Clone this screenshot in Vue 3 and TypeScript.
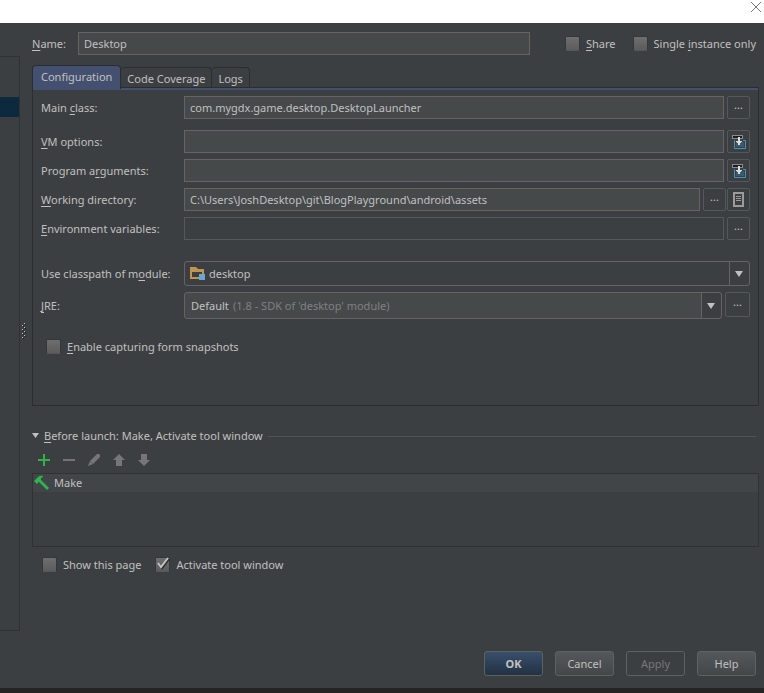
<script setup lang="ts">
import { reactive } from 'vue'

interface Mnemonic {
  before: string
  key: string
  after: string
}

interface FieldRow {
  id: string
  label: Mnemonic
  value: string
  disabled?: boolean
  spaced?: boolean
  buttons: { kind: 'browse' | 'insert' | 'list'; title: string }[]
}

const tabs: string[] = ['Configuration', 'Code Coverage', 'Logs']
const state = reactive({
  name: 'Desktop',
  tab: 'Configuration',
  share: false,
  single: false,
  capture: false,
  showPage: false,
  activate: true,
  module: 'desktop',
  jre: 'Default',
})

const rows = reactive<FieldRow[]>([
  {
    id: 'main-class',
    label: { before: 'Main ', key: 'c', after: 'lass:' },
    value: 'com.mygdx.game.desktop.DesktopLauncher',
    spaced: true,
    buttons: [{ kind: 'browse', title: 'Browse classes' }],
  },
  {
    id: 'vm-options',
    label: { before: '', key: 'V', after: 'M options:' },
    value: '',
    buttons: [{ kind: 'insert', title: 'Expand VM options' }],
  },
  {
    id: 'program-arguments',
    label: { before: 'Program a', key: 'r', after: 'guments:' },
    value: '',
    buttons: [{ kind: 'insert', title: 'Expand program arguments' }],
  },
  {
    id: 'working-directory',
    label: { before: '', key: 'W', after: 'orking directory:' },
    value: 'C:\\Users\\JoshDesktop\\git\\BlogPlayground\\android\\assets',
    buttons: [
      { kind: 'browse', title: 'Browse directories' },
      { kind: 'list', title: 'Insert macro' },
    ],
  },
  {
    id: 'environment-variables',
    label: { before: '', key: 'E', after: 'nvironment variables:' },
    value: '',
    disabled: true,
    buttons: [{ kind: 'browse', title: 'Edit environment variables' }],
  },
])
</script>

<template>
  <div class="window">
    <header class="titlebar">
      <button class="close" type="button" aria-label="Close">
        <svg width="12" height="12" viewBox="0 0 12 12"><path d="M1 1l10 10M11 1L1 11" stroke="#777" fill="none" /></svg>
      </button>
    </header>

    <div class="body">
      <aside class="sidebar"><div class="sidebar-selection"></div></aside>
      <div class="splitter">
        <svg width="5" height="16" viewBox="0 0 5 16">
          <path d="M3 .5h1M1 2.5h1M3 4.5h1M1 6.5h1M3 8.5h1M1 10.5h1M3 12.5h1M1 14.5h1" stroke="#c4c4c4" />
          <path d="M4 1.5h1M2 3.5h1M4 5.5h1M2 7.5h1M4 9.5h1M2 11.5h1M4 13.5h1M2 15.5h1" stroke="#202020" />
        </svg>
      </div>

      <main class="main">
        <div class="name-row">
          <label for="name"><u>N</u>ame:</label>
          <input id="name" v-model="state.name" class="field" type="text" />
          <div class="name-checks">
            <label class="check"><input v-model="state.share" type="checkbox" /><span><u>S</u>hare</span></label>
            <label class="check"><input v-model="state.single" type="checkbox" /><span>Single <u>i</u>nstance only</span></label>
          </div>
        </div>

        <div class="tabs" role="tablist">
          <button
            v-for="t in tabs"
            :key="t"
            type="button"
            role="tab"
            class="tab"
            :class="{ active: state.tab === t }"
            :aria-selected="state.tab === t"
            @click="state.tab = t"
          >{{ t }}</button>
        </div>

        <section class="panel">
          <div v-for="row in rows" :key="row.id" class="row" :class="{ spaced: row.spaced }">
            <label :for="row.id">{{ row.label.before }}<u>{{ row.label.key }}</u>{{ row.label.after }}</label>
            <div class="controls">
              <input :id="row.id" v-model="row.value" class="field" type="text" :disabled="row.disabled" />
              <button v-for="b in row.buttons" :key="b.kind" type="button" class="square" :aria-label="b.title">
                <span v-if="b.kind === 'browse'" class="dots">...</span>
                <svg v-else-if="b.kind === 'insert'" width="17" height="17" viewBox="-2 -2 17 17">
                  <path d="M3 5.500H2.500V13.500H13.500V5.500H11" fill="#3c3f41" stroke="#4393c4" />
                  <rect x="4" y="7" width="8" height="5" fill="#3d5a6b" />
                  <rect x=".5" y=".5" width="10" height="3" fill="#1c1e20" stroke="#8c8c8c" />
                  <path d="M6 2h2v4h2v1H9v1H8v2H6V8H5V7H4V6h2z" fill="#dcdcdc" />
                </svg>
                <svg v-else width="11" height="15" viewBox="0 0 11 15">
                  <rect x="1" y="1" width="9" height="13" fill="none" stroke="#9b9b9b" stroke-width="2" />
                  <path d="M3 4.500h5M3 6.500h5M3 8.500h5" stroke="#9b9b9b" />
                </svg>
              </button>
            </div>
          </div>

          <div class="row module-row">
            <label for="module">Use classpath of m<u>o</u>dule:</label>
            <div class="combo">
              <svg class="combo-icon" width="16" height="14" viewBox="0 0 16 14">
                <path d="M0 0h6l2 2h6v5h-2V5H2v5h7v2H0z" fill="#c09553" />
                <rect x="9" y="7" width="6" height="6" fill="#6ba7c9" />
              </svg>
              <select id="module" v-model="state.module" class="with-icon"><option>desktop</option></select>
              <svg class="arrow" width="20" height="23" viewBox="0 0 20 23"><path d="M.5 0v23" stroke="#646464" /><path d="M6 9h8l-4 6z" fill="#c0c0c0" /></svg>
            </div>
          </div>

          <div class="row jre-row">
            <label for="jre"><u>J</u>RE:</label>
            <div class="controls">
              <div class="combo filled">
                <select id="jre" v-model="state.jre"><option>Default</option></select>
                <span class="combo-hint">(1.8 - SDK of 'desktop' module)</span>
                <svg class="arrow" width="20" height="25" viewBox="0 0 20 25"><path d="M0 0h18l2 2v21l-2 2H0z" fill="#3c3f41" /><path d="M.5 0v25" stroke="#646464" /><path d="M6 10h8l-4 6z" fill="#c0c0c0" /></svg>
              </div>
              <button type="button" class="square large" aria-label="Browse JRE"><span class="dots">...</span></button>
            </div>
          </div>

          <label class="check capture"><input v-model="state.capture" type="checkbox" /><span><u>E</u>nable capturing form snapshots</span></label>
        </section>

        <section class="launch">
          <h2>
            <svg width="7" height="7" viewBox="0 0 7 7"><path d="M0 0h7L3.500 5z" fill="#c0c0c0" /></svg>
            <span><u>B</u>efore launch: Make, Activate tool window</span>
          </h2>
          <div class="toolbar">
            <button type="button" aria-label="Add">
              <svg width="16" height="16" viewBox="0 0 16 16"><path d="M8 2v12M2 8h12" stroke="#2fb344" stroke-width="2" /></svg>
            </button>
            <button type="button" aria-label="Remove">
              <svg width="16" height="16" viewBox="0 0 16 16"><path d="M2 8h12" stroke="#767472" stroke-width="2" /></svg>
            </button>
            <button type="button" aria-label="Edit">
              <svg width="16" height="16" viewBox="0 0 16 16"><path d="M2 14L4 9l7-7h2l1 1v2L7 12z" fill="#767676" /><path d="M4 9l3 3" stroke="#5c5f61" /></svg>
            </button>
            <button type="button" aria-label="Move up">
              <svg width="16" height="16" viewBox="0 0 16 16"><path d="M8 2l6 6h-3v6H5V8H2z" fill="#767676" /></svg>
            </button>
            <button type="button" aria-label="Move down">
              <svg width="16" height="16" viewBox="0 0 16 16"><path d="M8 14L2 8h3V2h6v6h3z" fill="#767676" /></svg>
            </button>
          </div>
          <ul class="tasks">
            <li>
              <svg width="16" height="16" viewBox="0 0 16 16">
                <path d="M0 6L4 2q2-2 5-1v1L7 3v2l8 8-2 2L5 7 4 7v1L3 9z" fill="#2fb350" />
              </svg>
              <span>Make</span>
            </li>
          </ul>
          <div class="launch-checks">
            <label class="check"><input v-model="state.showPage" type="checkbox" /><span>Show this page</span></label>
            <label class="check">
              <input v-model="state.activate" type="checkbox" />
              <svg v-if="state.activate" class="tick" width="16" height="15" viewBox="0 0 16 15">
                <path d="M4 7l3 4 7-9" fill="none" stroke="#26282a" stroke-width="2" />
                <path d="M3 6l3 4 7-9" fill="none" stroke="#c4c4c4" stroke-width="2" />
              </svg>
              <span>Activate tool window</span>
            </label>
          </div>
        </section>

        <footer class="actions">
          <button type="button" class="primary">OK</button>
          <button type="button">Cancel</button>
          <button type="button" disabled>Apply</button>
          <button type="button">Help</button>
        </footer>
      </main>
    </div>
    <div class="bottom-edge"></div>
  </div>
</template>

<style>
body {
  background: #3c3f41;
}
</style>

<style scoped>
.window {
  display: flex;
  flex-direction: column;
  min-height: 100vh;
  background: #3c3f41;
  color: #c0c0c0;
  font: 11px/16px "Noto Sans", "Open Sans", sans-serif;
}
.window *,
.window {
  box-sizing: border-box;
}
button,
input,
select {
  font: inherit;
  color: inherit;
  margin: 0;
}
button {
  padding: 0;
  background: none;
  border: 0;
}
svg {
  display: block;
  flex: none;
}
u {
  text-underline-offset: 2px;
  text-decoration-skip-ink: none;
}
label,
span {
  white-space: nowrap;
}
.titlebar {
  display: flex;
  justify-content: flex-end;
  height: 23px;
  padding: 1px 2px;
  background: #fff;
}
.close {
  height: 12px;
}
.body {
  flex: 1;
  display: flex;
}
.sidebar {
  width: 20px;
  margin: 33px 0 57px;
  padding-top: 40px;
  border: 1px solid #2f3133;
  border-left: 0;
}
.sidebar-selection {
  height: 20px;
  background: #0d293e;
}
.splitter {
  width: 12px;
  padding: 300px 0 0 1px;
}
.main {
  flex: 1;
  min-width: 0;
  display: flex;
  flex-direction: column;
  padding: 9px 5px 12px 0;
}
.name-row {
  display: flex;
  align-items: center;
}
.name-row > label {
  width: 46px;
}
.field {
  flex: 1;
  min-width: 0;
  height: 23px;
  padding: 0 5px;
  background: #45494a;
  border: 1px solid #646464;
  outline: 0;
}
.field:disabled {
  background: #3c3f41;
  border-color: #55585a;
}
.name-checks {
  display: flex;
  gap: 17px;
  padding: 0 3px 0 35px;
}
.check {
  position: relative;
  display: flex;
  align-items: center;
  gap: 6px;
}
.check input {
  appearance: none;
  width: 15px;
  height: 15px;
  margin-bottom: 1px;
  border: 1px solid #35383a;
  border-bottom-color: #55585a;
  border-radius: 2px;
  background: linear-gradient(#6e6e6e, #5c5c5c);
}
.tick {
  position: absolute;
  left: 0;
  top: 0;
}
.tabs {
  display: flex;
  align-items: flex-end;
  margin-top: 10px;
}
.tab {
  height: 20px;
  padding: 2px 6px 0;
  border: 1px solid #2b2d2e;
  border-left-width: 0;
  border-bottom: 0;
  border-radius: 4px 4px 0 0;
}
.tab.active {
  position: relative;
  height: 24px;
  margin-bottom: -2px;
  padding: 0 8px 1px;
  border-left-width: 1px;
  background: #43506f;
}
.panel {
  display: flex;
  flex-direction: column;
  min-height: 319px;
  padding: 7px 8px 50px;
  border: 1px solid #2b2d2e;
  box-shadow: inset 0 2px #43506f;
}
.row {
  display: grid;
  grid-template-columns: 143px minmax(0, 1fr);
  align-items: center;
  margin-top: 6px;
}
.row:first-child {
  margin-top: 1px;
}
.spaced {
  margin-bottom: 5px;
}
.controls {
  display: flex;
  gap: 3px;
}
.square {
  flex: none;
  width: 23px;
  height: 23px;
  display: flex;
  align-items: center;
  justify-content: center;
  border: 1px solid #55585a;
  border-radius: 2px;
}
.square + .square {
  margin-left: -2px;
}
.square.large {
  width: 25px;
  height: 25px;
}
.dots {
  padding-bottom: 5px;
}
.module-row {
  margin-top: 21px;
}
.combo {
  position: relative;
  flex: 1;
  display: flex;
  height: 25px;
  border: 1px solid #646464;
  border-radius: 3px;
}
.filled {
  height: 27px;
  background: #45494a;
}
.combo select {
  appearance: none;
  flex: 1;
  min-width: 0;
  padding: 0 6px;
  border: 0;
  outline: 0;
  background: none;
}
.combo select.with-icon {
  padding-left: 24px;
}
.combo-icon {
  position: absolute;
  left: 5px;
  top: 5px;
}
.combo-hint {
  position: absolute;
  left: 48px;
  top: 5px;
  color: #808080;
  pointer-events: none;
}
.combo .arrow {
  pointer-events: none;
}
.capture {
  align-self: flex-start;
  margin: 20px 0 0 5px;
}
.launch {
  margin-top: 22px;
}
h2 {
  display: flex;
  align-items: center;
  gap: 5px;
  margin: 0;
  font: inherit;
}
h2::after {
  content: "";
  flex: 1;
  height: 1px;
  margin-right: 3px;
  background: #515456;
}
.toolbar {
  display: flex;
  gap: 9px;
  padding: 8px 4px 5px;
}
.tasks {
  height: 74px;
  margin: 0;
  padding: 0;
  border: 1px solid #2f3133;
  list-style: none;
}
.tasks li {
  display: flex;
  align-items: center;
  gap: 4px;
  height: 18px;
  padding-left: 1px;
  background: #414547;
}
.launch-checks {
  display: flex;
  gap: 14px;
  padding: 10px;
}
.actions {
  display: flex;
  justify-content: flex-end;
  gap: 12px;
  margin-top: auto;
  padding-right: 3px;
}
.actions button {
  width: 59px;
  height: 25px;
  border: 1px solid #5e6162;
  border-radius: 3px;
  background: linear-gradient(#54585a, #434748);
}
.actions .primary {
  background: linear-gradient(#384f6b, #233143);
  font-weight: 700;
}
.actions button:disabled {
  background: none;
  color: #777777;
}
.bottom-edge {
  height: 5px;
  background: #242424;
}
</style>
